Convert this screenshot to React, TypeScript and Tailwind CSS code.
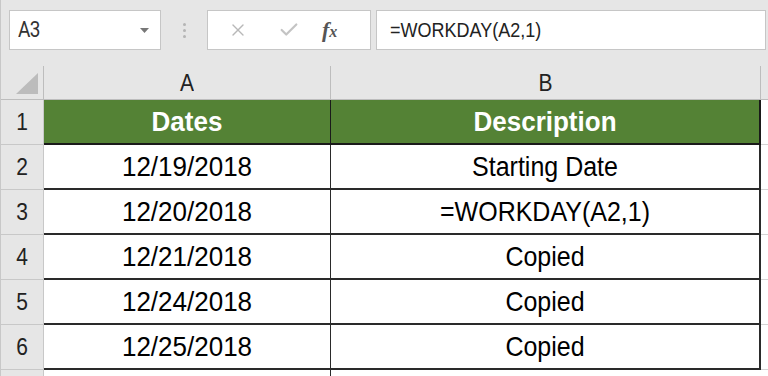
import React from 'react';
import { X, Check } from 'lucide-react';

const rows = [
  { n: '2', date: '12/19/2018', desc: 'Starting Date' },
  { n: '3', date: '12/20/2018', desc: '=WORKDAY(A2,1)' },
  { n: '4', date: '12/21/2018', desc: 'Copied' },
  { n: '5', date: '12/24/2018', desc: 'Copied' },
  { n: '6', date: '12/25/2018', desc: 'Copied' },
];

export default function App() {
  return <div className="w-[768px] h-[376px] overflow-hidden bg-[#e6e6e6] border-l border-[#c8c8c8] font-['Liberation_Sans',Arial,sans-serif]">
      {/* formula bar */}
      <div className="h-[66px] flex items-start pt-[10px]">
        <div className="ml-[8px] w-[152px] h-[40px] bg-white border border-[#c6c6c6] flex items-center justify-between pl-[8px] pr-[11px]">
          <span className="inline-block scale-y-[1.2] text-[19px] text-[#333] font-['Roboto',sans-serif] tracking-[-0.6px]">A3</span>
          <svg width="9" height="5" viewBox="0 0 9 5"><path d="M0 0 H9 L4.5 5 Z" fill="#777" /></svg>
        </div>
        <div className="w-[46px] h-[40px] flex items-center justify-center">
          <div className="flex flex-col gap-[3px]">
            <span className="w-[3px] h-[3px] rounded-full bg-[#b5b5b5]" />
            <span className="w-[3px] h-[3px] rounded-full bg-[#b5b5b5]" />
            <span className="w-[3px] h-[3px] rounded-full bg-[#b5b5b5]" />
          </div>
        </div>
        <div className="w-[164px] h-[40px] bg-white border border-[#c6c6c6] flex items-center pl-[20px]">
          <X size={20} strokeWidth={1.6} className="text-[#b8b8b8]" />
          <Check size={22} strokeWidth={2.4} className="ml-[30px] text-[#c4c4c4]" />
          <span className="ml-[22px] font-['Liberation_Serif',serif] italic font-bold text-[#555] text-[22px] leading-none">f<span className="text-[16px]">x</span></span>
        </div>
        <div className="ml-[5px] w-[390px] h-[40px] bg-white border border-[#c6c6c6] flex items-center pl-[13px]">
          <span className="inline-block scale-y-[1.12] text-[18px] text-[#222]">=WORKDAY(A2,1)</span>
        </div>
      </div>

      {/* column headers */}
      <div className="flex h-[34px]">
        <div className="w-[43px] border-r border-b border-[#bdbdbd] flex items-end justify-end pr-[5px] pb-[5px]">
          <svg width="22" height="21" viewBox="0 0 22 21"><path d="M22 0 V21 H0 Z" fill="#bcbcbc" /></svg>
        </div>
        <div className="w-[287px] border-r border-b border-[#bdbdbd] flex items-center justify-center text-[21px] text-[#222]"><span className="inline-block scale-y-[1.18]">A</span></div>
        <div className="w-[430px] border-r border-b border-[#bdbdbd] flex items-center justify-center text-[21px] text-[#222]"><span className="inline-block scale-y-[1.18]">B</span></div>
        <div className="flex-1 border-b border-[#bdbdbd]" />
      </div>

      {/* row 1 */}
      <div className="flex h-[45px]">
        <div className="w-[43px] border-r border-b border-[#c8c8c8] flex items-center justify-center text-[21px] text-[#222]"><span className="inline-block scale-y-[1.15]">1</span></div>
        <div className="w-[287px] bg-[#548235] border-r border-b-2 border-[#1a1a1a] flex items-center justify-center text-white font-bold text-[26px]"><span className="inline-block scale-y-[1.08]">Dates</span></div>
        <div className="w-[430px] bg-[#548235] border-r-2 border-b-2 border-[#1a1a1a] flex items-center justify-center text-white font-bold text-[26px]"><span className="inline-block scale-y-[1.08]">Description</span></div>
        <div className="flex-1 bg-white border-b border-[#d4d4d4]" />
      </div>

      {rows.map(r => <div key={r.n} className="flex h-[45px]">
          <div className="w-[43px] border-r border-b border-[#c8c8c8] flex items-center justify-center text-[21px] text-[#222]"><span className="inline-block scale-y-[1.15]">{r.n}</span></div>
          <div className="w-[287px] bg-white border-r border-b-2 border-[#2a2a2a] flex items-center justify-center text-[26px] text-black"><span className="inline-block scale-y-[1.08]">{r.date}</span></div>
          <div className="w-[430px] bg-white border-r-2 border-b-2 border-[#2a2a2a] flex items-center justify-center text-[25px] text-black"><span className="inline-block scale-y-[1.1]">{r.desc}</span></div>
          <div className="flex-1 bg-white border-b border-[#d4d4d4]" />
        </div>)}

      <div className="flex h-[20px]">
        <div className="w-[43px] border-r border-[#c8c8c8]" />
        <div className="w-[287px] bg-white border-r border-[#2a2a2a]" />
        <div className="flex-1 bg-white" />
      </div>
    </div>;
}
